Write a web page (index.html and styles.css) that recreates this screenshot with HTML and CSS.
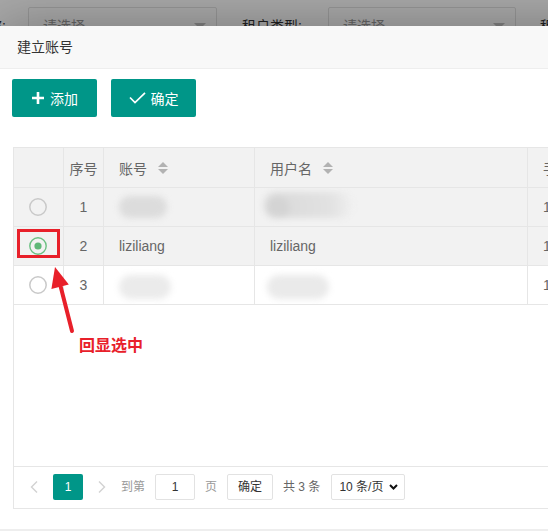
FILE: index.html
```html
<!DOCTYPE html>
<html lang="zh-CN">
<head>
<meta charset="utf-8">
<title>建立账号</title>
<link rel="stylesheet" href="styles.css">
</head>
<body>
<div class="page">
  <div class="form-row">
    <div class="lbl lbl-first"><span>租户名称:</span></div>
    <div class="sel sel-1"><span>请选择</span><i class="edge"></i></div>
    <div class="lbl lbl-mid">租户类型:</div>
    <div class="sel sel-2"><span>请选择</span><i class="edge"></i></div>
    <div class="lbl lbl-last">租户状态:</div>
  </div>
</div>
<div class="shade"></div>

<div class="layer">
  <div class="layer-title">建立账号</div>
  <div class="layer-content">
    <div class="toolbar">
      <button class="btn"><svg class="ico" width="14" height="14" viewBox="0 0 14 14"><path d="M7 1V13M1 7H13" stroke="#fff" stroke-width="2.6" fill="none"/></svg><span>添加</span></button>
      <button class="btn"><svg class="ico" width="17" height="12" viewBox="0 0 17 12"><path d="M1 5.5L6 10.5L16 0.8" stroke="#fff" stroke-width="1.7" fill="none"/></svg><span>确定</span></button>
    </div>
    <div class="table-box">
      <div class="table-main">
        <div class="row head">
          <div class="cell c-center"></div>
          <div class="cell c-center">序号</div>
          <div class="cell">账号<span class="sort"><i class="up"></i><i class="down"></i></span></div>
          <div class="cell">用户名<span class="sort"><i class="up"></i><i class="down"></i></span></div>
          <div class="cell">手机号</div>
        </div>
        <div class="row grey">
          <div class="cell c-radio"><svg width="18" height="18" viewBox="0 0 18 18"><circle cx="9" cy="9" r="8.2" fill="none" stroke="#c9c9c9" stroke-width="1.5"/></svg></div>
          <div class="cell c-center">1</div>
          <div class="cell"><span class="blur b1"></span></div>
          <div class="cell"><span class="blur b2"></span></div>
          <div class="cell">13800000001</div>
        </div>
        <div class="row grey">
          <div class="cell c-radio"><svg width="18" height="18" viewBox="0 0 18 18"><circle cx="9" cy="9" r="8.2" fill="none" stroke="#6cc083" stroke-width="1.4"/><circle cx="9" cy="9" r="3.6" fill="#5FB878"/></svg></div>
          <div class="cell c-center">2</div>
          <div class="cell">liziliang</div>
          <div class="cell">liziliang</div>
          <div class="cell">13800000002</div>
        </div>
        <div class="row">
          <div class="cell c-radio"><svg width="18" height="18" viewBox="0 0 18 18"><circle cx="9" cy="9" r="8.2" fill="none" stroke="#c9c9c9" stroke-width="1.5"/></svg></div>
          <div class="cell c-center">3</div>
          <div class="cell"><span class="blur b3"></span></div>
          <div class="cell"><span class="blur b4"></span></div>
          <div class="cell">13800000003</div>
        </div>
      </div>
      <div class="laypage">
        <span class="pg-arrow pg-prev"><svg width="8" height="12" viewBox="0 0 8 12"><path d="M7 0.5L1.5 6L7 11.5" stroke="#d2d2d2" stroke-width="1.4" fill="none"/></svg></span>
        <span class="pg-cur">1</span>
        <span class="pg-arrow pg-next"><svg width="8" height="12" viewBox="0 0 8 12"><path d="M1 0.5L6.5 6L1 11.5" stroke="#d2d2d2" stroke-width="1.4" fill="none"/></svg></span>
        <span class="pg-skip">到第</span>
        <span class="pg-input">1</span>
        <span class="pg-unit">页</span>
        <span class="pg-ok">确定</span>
        <span class="pg-count">共 3 条</span>
        <span class="pg-limit">10 条/页<svg class="chev" width="9" height="6" viewBox="0 0 9 6"><path d="M1 1L4.5 4.5L8 1" stroke="#111" stroke-width="2" fill="none"/></svg></span>
      </div>
    </div>
    <div class="layer-foot"></div>
  </div>
</div>

<div class="mark-box"></div>
<svg class="mark-arrow" width="40" height="80" viewBox="0 0 40 80">
  <path d="M20 24L32 71" stroke="#e8202a" stroke-width="4" stroke-linecap="round" fill="none"/>
  <polygon points="15,7 11.4,29 28.8,24.6" fill="#e8202a"/>
</svg>
<div class="mark-text">回显选中</div>
</body>
</html>
```

FILE: styles.css
```css
html, body {
  margin: 0;
  padding: 0;
}
body {
  width: 548px;
  height: 531px;
  overflow: hidden;
  position: relative;
  background: #fff;
  font-family: "Liberation Sans", "Noto Sans CJK SC", sans-serif;
  font-size: 14px;
  color: #333;
}

/* background page */
.form-row {
  display: flex;
  align-items: flex-start;
  padding-top: 7px;
  height: 38px;
}
.form-row > div {
  flex-shrink: 0;
}
.lbl {
  height: 38px;
  line-height: 38px;
  white-space: nowrap;
  color: #333;
  box-sizing: border-box;
}
.lbl-first {
  width: 28px;
  display: flex;
  justify-content: flex-end;
  padding-right: 22px;
}
.lbl-mid {
  width: 111px;
  padding-left: 25px;
}
.lbl-last {
  padding-left: 24px;
}
.sel {
  position: relative;
  height: 38px;
  line-height: 36px;
  border: 1px solid #e2e2e2;
  border-radius: 2px;
  box-sizing: border-box;
  padding-left: 14px;
  color: #999;
  background: #fff;
}
.sel-1 { width: 189px; }
.sel-2 { width: 188px; }
.edge {
  position: absolute;
  right: 10px;
  top: 50%;
  margin-top: -3px;
  width: 0;
  height: 0;
  border-left: 6px solid transparent;
  border-right: 6px solid transparent;
  border-top: 6px solid #c2c2c2;
}
.shade {
  position: absolute;
  inset: 0;
  background: #000;
  opacity: 0.34;
}

/* modal layer */
.layer {
  position: absolute;
  left: 0;
  top: 26px;
  width: 640px;
  height: 505px;
  background: #fff;
  box-shadow: 1px 1px 50px rgba(0, 0, 0, 0.3);
}
.layer-title {
  height: 42px;
  line-height: 42px;
  padding-left: 17px;
  background: #f8f8f8;
  border-bottom: 1px solid #eee;
  color: #333;
  font-size: 14px;
}
.layer-content {
  padding: 10px 0 0 12px;
}
.toolbar {
  display: flex;
  gap: 14px;
}
.btn {
  width: 85px;
  height: 38px;
  padding: 0;
  border: none;
  border-radius: 2px;
  background: #009688;
  color: #fff;
  font-family: inherit;
  font-size: 14px;
  display: flex;
  align-items: center;
  justify-content: center;
  gap: 5px;
}
.ico { display: block; }

/* table */
.table-box {
  margin-top: 30px;
  margin-left: 1px;
  border: 1px solid #e6e6e6;
  border-right: none;
}
.table-main {
  height: 318px;
}
.row {
  display: grid;
  grid-template-columns: 50px 40px 151px 273px 300px;
  height: 39px;
  background: #fff;
}
.row.head {
  height: 40px;
  background: #f2f2f2;
}
.row.grey {
  background: #f2f2f2;
}
.cell {
  box-sizing: border-box;
  border-right: 1px solid #e6e6e6;
  border-bottom: 1px solid #e6e6e6;
  padding: 0 15px;
  display: flex;
  align-items: center;
  color: #666;
  white-space: nowrap;
  overflow: hidden;
}
.c-center {
  justify-content: center;
  padding: 0;
}
.c-radio {
  justify-content: center;
  padding: 0 2px 0 0;
}
.c-radio svg { display: block; }
.sort {
  display: inline-flex;
  flex-direction: column;
  gap: 2px;
  margin-left: 11px;
}
.sort i {
  width: 0;
  height: 0;
  border-left: 5px solid transparent;
  border-right: 5px solid transparent;
}
.sort .up { border-bottom: 5px solid #b2b2b2; }
.sort .down { border-top: 5px solid #b2b2b2; }

.blur {
  display: inline-block;
  border-radius: 12px;
  filter: blur(3px);
}
.b1 {
  width: 48px;
  height: 22px;
  background: #dcdcdc;
}
.b2 {
  width: 88px;
  height: 26px;
  margin-left: -6px;
  margin-top: -4px;
  background: radial-gradient(circle at 14px 16px, #d4d4d4 11px, #dcdcdc 12px, #e2e2e2 70%, #f0f0f0 100%);
}
.b3 {
  width: 52px;
  height: 24px;
  margin-top: 4px;
  background: #ebebeb;
}
.b4 {
  width: 62px;
  height: 24px;
  margin-left: -3px;
  margin-top: 3px;
  background: #eaeaea;
}

/* pagination */
.laypage {
  border-top: 1px solid #e6e6e6;
  height: 34px;
  padding-top: 7px;
  display: flex;
  align-items: flex-start;
  font-size: 12px;
}
.laypage > span {
  height: 26px;
  line-height: 26px;
  box-sizing: border-box;
  white-space: nowrap;
  flex-shrink: 0;
}
.pg-arrow {
  width: 8px;
  display: flex;
  align-items: center;
}
.pg-arrow svg { display: block; }
.pg-prev { margin-left: 16px; }
.pg-cur {
  margin-left: 15px;
  width: 30px;
  background: #009688;
  color: #fff;
  border-radius: 2px;
  text-align: center;
}
.pg-next { margin-left: 15px; }
.pg-skip {
  margin-left: 15px;
  color: #999;
}
.pg-input {
  margin-left: 10px;
  width: 40px;
  border: 1px solid #e2e2e2;
  border-radius: 2px;
  text-align: center;
  line-height: 24px !important;
  color: #333;
}
.pg-unit {
  margin-left: 10px;
  color: #999;
}
.pg-ok {
  margin-left: 10px;
  width: 46px;
  border: 1px solid #e2e2e2;
  border-radius: 2px;
  text-align: center;
  line-height: 24px !important;
  color: #333;
}
.pg-count {
  margin-left: 10px;
  color: #666;
}
.pg-limit {
  margin-left: 11px;
  width: 74px;
  border: 1px solid #e2e2e2;
  border-radius: 2px;
  padding-left: 7px;
  display: flex;
  align-items: center;
  color: #333;
}
.chev {
  display: block;
  margin-left: auto;
  margin-right: 6px;
}
.layer-foot {
  margin-top: 20px;
  margin-left: -12px;
  border-top: 2px solid #eee;
}

/* annotations */
.mark-box {
  position: absolute;
  left: 17px;
  top: 229px;
  width: 43px;
  height: 29px;
  box-sizing: border-box;
  border: 3px solid #e8202a;
}
.mark-arrow {
  position: absolute;
  left: 40px;
  top: 260px;
}
.mark-text {
  position: absolute;
  left: 79px;
  top: 335px;
  font-size: 16px;
  line-height: 18px;
  font-weight: bold;
  color: #e8202a;
  font-family: "Noto Sans CJK SC", sans-serif;
}
```
